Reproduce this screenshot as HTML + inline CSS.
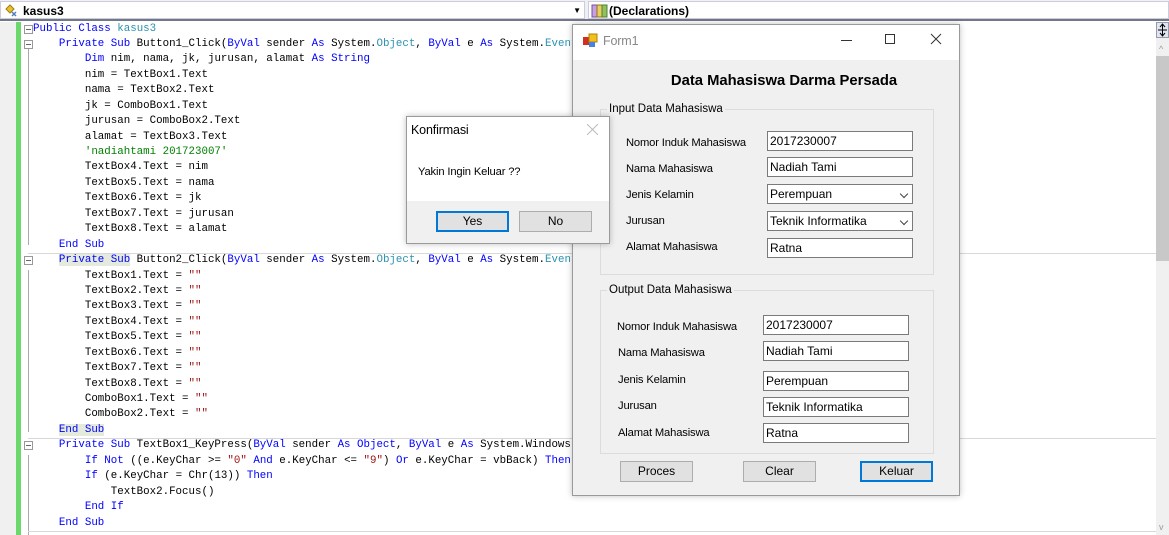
<!DOCTYPE html>
<html><head><meta charset="utf-8">
<style>
*{margin:0;padding:0;box-sizing:border-box}
body{width:1169px;height:535px;overflow:hidden;background:#fff;position:relative;font-family:"Liberation Sans",sans-serif}
.abs{position:absolute}
.top{left:0;top:0;width:1169px;height:21px;background:#eef0f6;border-bottom:2px solid #707888}
.cb{position:absolute;top:1px;height:18px;font-weight:bold;font-size:12px;line-height:18px}
.gut{left:0;top:22px;width:16px;height:513px;background:#f0f0f0}
.green{left:16px;top:22px;width:5px;height:513px;background:#6ad86a}
pre{position:absolute;left:33px;top:21.5px;font-family:"Liberation Mono",monospace;font-size:10.8px;line-height:15.44px;color:#000}
.k{color:#0000ff}.t{color:#2b91af}.s{color:#a31515}.c{color:#008000}
.hl{background:#e4ebdc}
.sep{left:28px;height:1px;width:1128px;background:#d8d8d8}
.fold{position:absolute;left:24px;width:9px;height:9px;border:1px solid #999;background:#fff}
.fold:after{content:"";position:absolute;left:1px;top:3px;width:5px;height:1px;background:#666}
.vl{left:28px;width:1px;background:#aaa}
.sb{left:1156px;top:22px;width:13px;height:513px;background:#f0f0f0}
.win{background:#f0f0f0;border:1px solid #9a9a9a;box-shadow:0 0 6px rgba(0,0,0,.25)}
.tb{position:absolute;left:0;top:0;right:0;background:#fff}
.lbl{position:absolute;font-size:11.2px;letter-spacing:-0.15px;color:#000}
.f .lbl,.lb{margin-top:2px}
.box{position:absolute;height:20px;background:#fff;border:1px solid #7a7a7a;font-size:12px;line-height:18px;padding-left:2px}
.grp{position:absolute;border:1px solid #dcdcdc}
.grp span{position:absolute;top:-8px;left:6px;background:#f0f0f0;padding:0 2px;font-size:11.5px;line-height:14px}
.btn{position:absolute;height:21px;background:#e1e1e1;border:1px solid #adadad;font-size:12px;text-align:center;line-height:19px}
.btn.f{border:2px solid #0078d7;line-height:17px}
.chev{position:absolute;right:5px;top:6px;width:6px;height:6px;border-right:1px solid #444;border-bottom:1px solid #444;transform:rotate(45deg)}
</style></head><body>
<div class="abs top">
 <div class="cb" style="left:0;width:585px;background:#fff;border:1px solid #ccd;"><svg class="abs" style="left:2px;top:1px" width="18" height="16"><path d="M3 6l4-4 4 4-4 4z" fill="#e8c030" stroke="#a08010"/><path d="M9 9l4 4m-4 0 4-4" stroke="#5080c0" stroke-width="1.5"/></svg><span style="position:absolute;left:22px">kasus3</span><span style="position:absolute;right:3px;top:0;font-size:8px">▼</span></div>
 <div class="cb" style="left:588px;width:581px;background:#fff;border:1px solid #ccd;"><svg class="abs" style="left:2px;top:1px" width="18" height="16"><rect x="1" y="2" width="5" height="12" fill="#c8a0e0" stroke="#7050a0"/><rect x="6" y="2" width="5" height="12" fill="#e8d060" stroke="#907020"/><rect x="11" y="2" width="5" height="12" fill="#90c060" stroke="#508030"/></svg><span style="position:absolute;left:20px">(Declarations)</span></div>
</div>
<div class="abs gut"></div><div class="abs green"></div>
<div class="abs vl" style="top:40px;height:205px"></div>
<div class="abs vl" style="top:270px;height:162px"></div>
<div class="abs vl" style="top:455px;height:80px"></div>
<div class="fold" style="top:25px"></div>
<div class="fold" style="top:40px"></div>
<div class="fold" style="top:256px"></div>
<div class="fold" style="top:441px"></div>
<div class="abs sep" style="top:253px"></div>
<div class="abs sep" style="top:438px"></div>
<div class="abs sep" style="top:531px"></div>
<pre><span class="k">Public Class</span> <span class="t">kasus3</span>
    <span class="k">Private Sub</span> Button1_Click(<span class="k">ByVal</span> sender <span class="k">As</span> System.<span class="t">Object</span>, <span class="k">ByVal</span> e <span class="k">As</span> System.<span class="t">EventArgs</span>) <span class="k">Handles</span> Button1.Click
        <span class="k">Dim</span> nim, nama, jk, jurusan, alamat <span class="k">As String</span>
        nim = TextBox1.Text
        nama = TextBox2.Text
        jk = ComboBox1.Text
        jurusan = ComboBox2.Text
        alamat = TextBox3.Text
        <span class="c">'nadiahtami 201723007'</span>
        TextBox4.Text = nim
        TextBox5.Text = nama
        TextBox6.Text = jk
        TextBox7.Text = jurusan
        TextBox8.Text = alamat
    <span class="k">End Sub</span>
    <span class="k hl">Private Sub</span> Button2_Click(<span class="k">ByVal</span> sender <span class="k">As</span> System.<span class="t">Object</span>, <span class="k">ByVal</span> e <span class="k">As</span> System.<span class="t">EventArgs</span>) <span class="k">Handles</span> Button2.Click
        TextBox1.Text = <span class="s">""</span>
        TextBox2.Text = <span class="s">""</span>
        TextBox3.Text = <span class="s">""</span>
        TextBox4.Text = <span class="s">""</span>
        TextBox5.Text = <span class="s">""</span>
        TextBox6.Text = <span class="s">""</span>
        TextBox7.Text = <span class="s">""</span>
        TextBox8.Text = <span class="s">""</span>
        ComboBox1.Text = <span class="s">""</span>
        ComboBox2.Text = <span class="s">""</span>
    <span class="k hl">End Sub</span>
    <span class="k">Private Sub</span> TextBox1_KeyPress(<span class="k">ByVal</span> sender <span class="k">As Object</span>, <span class="k">ByVal</span> e <span class="k">As</span> System.Windows.Forms.KeyPressEventArgs)
        <span class="k">If Not</span> ((e.KeyChar &gt;= <span class="s">"0"</span> <span class="k">And</span> e.KeyChar &lt;= <span class="s">"9"</span>) <span class="k">Or</span> e.KeyChar = vbBack) <span class="k">Then</span> e.Handled = <span class="k">True</span>
        <span class="k">If</span> (e.KeyChar = Chr(13)) <span class="k">Then</span>
            TextBox2.Focus()
        <span class="k">End If</span>
    <span class="k">End Sub</span></pre>
<div class="abs sb"><div class="abs" style="left:0;top:0;width:13px;height:16px;background:#dfe6f2;border:1px solid #99a"></div><svg class="abs" style="left:1px;top:1px" width="11" height="14"><path d="M5.5 1v12M1 7h9M3 4l2.5-3 2.5 3M3 10l2.5 3 2.5-3" stroke="#000" fill="none"/></svg><div class="abs" style="left:3px;top:22px;font-size:9px;color:#999">^</div><div class="abs" style="left:0;top:34px;width:13px;height:205px;background:#c8c8c8"></div><div class="abs" style="left:3px;top:500px;font-size:9px;color:#999">v</div></div>

<div class="abs win" style="left:572px;top:24px;width:388px;height:472px">
 <div class="tb" style="height:35px">
  <svg class="abs" style="left:9px;top:8px" width="16" height="16"><rect x="1" y="4" width="6" height="8" fill="#d03020"/><rect x="7" y="1" width="8" height="8" fill="#f0c020" stroke="#b08000"/><rect x="7" y="9" width="6" height="5" fill="#4a80e0"/></svg>
  <div class="lbl" style="left:30px;top:9px;font-size:12.5px;color:#888">Form1</div>
  <div class="abs" style="left:268px;top:15px;width:11px;height:1px;background:#333"></div>
  <div class="abs" style="left:312px;top:9px;width:10px;height:10px;border:1px solid #333"></div>
  <svg class="abs" style="left:357px;top:8px" width="12" height="12"><path d="M1 1l10 10M11 1 1 11" stroke="#333"/></svg>
 </div>
 <div class="lbl" style="left:0;width:422px;text-align:center;top:48px;font-weight:bold;font-size:14.8px;letter-spacing:0">Data Mahasiswa Darma Persada</div>
 <div class="grp" style="left:27px;top:84px;width:334px;height:166px"><span>Input Data Mahasiswa</span></div>
 <div class="lbl lb" style="left:53px;top:110px">Nomor Induk Mahasiswa</div>
 <div class="lbl lb" style="left:53px;top:136px">Nama Mahasiswa</div>
 <div class="lbl lb" style="left:53px;top:162px">Jenis Kelamin</div>
 <div class="lbl lb" style="left:53px;top:188px">Jurusan</div>
 <div class="lbl lb" style="left:53px;top:214px">Alamat Mahasiswa</div>
 <div class="box" style="left:194px;top:106px;width:146px">2017230007</div>
 <div class="box" style="left:194px;top:132px;width:146px">Nadiah Tami</div>
 <div class="box" style="left:194px;top:159px;width:146px">Perempuan<div class="chev"></div></div>
 <div class="box" style="left:194px;top:186px;width:146px">Teknik Informatika<div class="chev"></div></div>
 <div class="box" style="left:194px;top:213px;width:146px">Ratna</div>
 <div class="grp" style="left:27px;top:265px;width:334px;height:164px"><span>Output Data Mahasiswa</span></div>
 <div class="lbl lb" style="left:44px;top:294px">Nomor Induk Mahasiswa</div>
 <div class="lbl lb" style="left:45px;top:320px">Nama Mahasiswa</div>
 <div class="lbl lb" style="left:45px;top:347px">Jenis Kelamin</div>
 <div class="lbl lb" style="left:45px;top:373px">Jurusan</div>
 <div class="lbl lb" style="left:45px;top:400px">Alamat Mahasiswa</div>
 <div class="box" style="left:190px;top:290px;width:146px">2017230007</div>
 <div class="box" style="left:190px;top:316px;width:146px">Nadiah Tami</div>
 <div class="box" style="left:190px;top:346px;width:146px">Perempuan</div>
 <div class="box" style="left:190px;top:372px;width:146px">Teknik Informatika</div>
 <div class="box" style="left:190px;top:398px;width:146px">Ratna</div>
 <div class="btn" style="left:47px;top:436px;width:73px">Proces</div>
 <div class="btn" style="left:170px;top:436px;width:73px">Clear</div>
 <div class="btn f" style="left:287px;top:436px;width:73px">Keluar</div>
</div>

<div class="abs win" style="left:406px;top:116px;width:204px;height:128px;background:#f0f0f0">
 <div class="tb" style="height:84px">
  <div class="lbl" style="left:4px;top:6px;font-size:12.5px">Konfirmasi</div>
  <svg class="abs" style="left:180px;top:7px" width="11" height="11"><path d="M0 0l11 11M11 0 0 11" stroke="#bbb"/></svg>
  <div class="lbl" style="left:11px;top:49px">Yakin Ingin Keluar ??</div>
 </div>
 <div class="btn f" style="left:29px;top:94px;width:73px">Yes</div>
 <div class="btn" style="left:112px;top:94px;width:73px">No</div>
</div>
</body></html>
